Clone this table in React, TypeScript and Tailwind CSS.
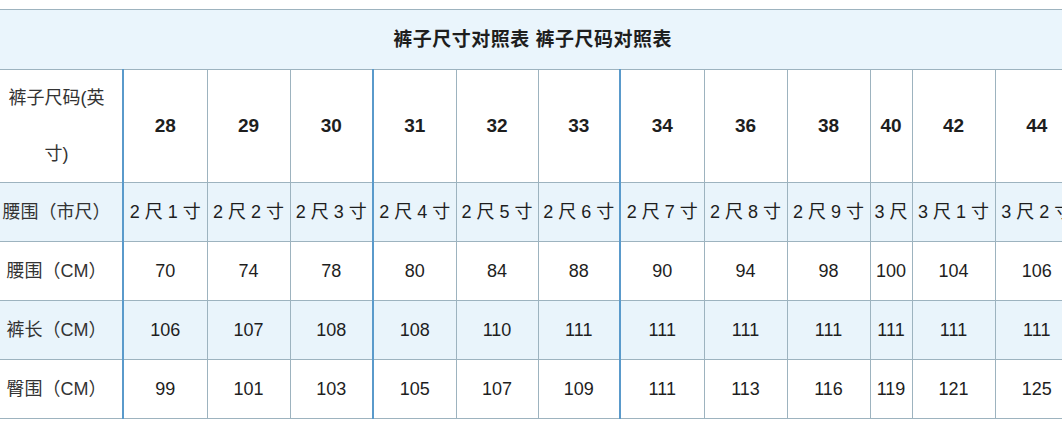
const SIZES = ["28", "29", "30", "31", "32", "33", "34", "36", "38", "40", "42", "44"];

// column widths in px, label column first
const WIDTHS = ["w-[136px]", "w-[84px]", "w-[83px]", "w-[83px]", "w-[83px]", "w-[82px]", "w-[82px]", "w-[84px]", "w-[83px]", "w-[83px]", "w-[42px]", "w-[83px]", "w-[83px]"];

// thick blue dividers sit before columns 28, 31 and 34
const THICK = new Set([1, 4, 7]);

const ROWS: { label: string; values: string[]; tint: boolean }[] = [
  {
    label: "腰围（市尺）",
    values: ["2 尺 1 寸", "2 尺 2 寸", "2 尺 3 寸", "2 尺 4 寸", "2 尺 5 寸", "2 尺 6 寸", "2 尺 7 寸", "2 尺 8 寸", "2 尺 9 寸", "3 尺", "3 尺 1 寸", "3 尺 2 寸"],
    tint: true,
  },
  { label: "腰围（CM）", values: ["70", "74", "78", "80", "84", "88", "90", "94", "98", "100", "104", "106"], tint: false },
  { label: "裤长（CM）", values: ["106", "107", "108", "108", "110", "111", "111", "111", "111", "111", "111", "111"], tint: true },
  { label: "臀围（CM）", values: ["99", "101", "103", "105", "107", "109", "111", "113", "116", "119", "121", "125"], tint: false },
];

const font = "font-['Liberation_Sans','Noto_Sans_CJK_SC',sans-serif]";

function edge(i: number) {
  if (i === 0) return "";
  return THICK.has(i) ? "border-l-2 border-l-[#5a9acb]" : "border-l border-l-[#9db3bf]";
}

export default function App() {
  return (
    <div className={`h-[425px] w-[1062px] overflow-hidden bg-white pt-[9px] ${font} text-[#1e1e1e]`}>
      <table className="ml-[-13px] w-[1091px] table-fixed border-collapse">
        <colgroup>
          {WIDTHS.map((w, i) => (
            <col key={i} className={w} />
          ))}
        </colgroup>
        <tbody>
          <tr className="h-[60px] border-y border-[#9db3bf] bg-[#eaf5fc]">
            <td colSpan={13} className="pt-[2px] text-center text-[19px] font-bold tracking-[0.5px]">
              裤子尺寸对照表 裤子尺码对照表
            </td>
          </tr>
          <tr className="h-[113px] border-b border-[#9db3bf] bg-white">
            <td className="pl-[4px] text-center text-[18px] leading-[56px] text-[#333]">
              裤子尺码(英
              <br />
              寸)
            </td>
            {SIZES.map((s, i) => (
              <td key={s} className={`${edge(i + 1)} text-center text-[19px] font-bold`}>
                {s}
              </td>
            ))}
          </tr>
          {ROWS.map((row) => (
            <tr
              key={row.label}
              className={`h-[59px] border-b border-[#9db3bf] ${row.tint ? "bg-[#e9f4fb]" : "bg-white"}`}
            >
              <td className="whitespace-nowrap pl-[4px] text-center text-[18px] text-[#333]">{row.label}</td>
              {row.values.map((v, i) => (
                <td
                  key={i}
                  className={`${edge(i + 1)} whitespace-nowrap text-center text-[18px] ${
                    v.includes("尺") ? "overflow-hidden px-0" : ""
                  }`}
                >
                  {v}
                </td>
              ))}
            </tr>
          ))}
        </tbody>
      </table>
    </div>
  );
}
